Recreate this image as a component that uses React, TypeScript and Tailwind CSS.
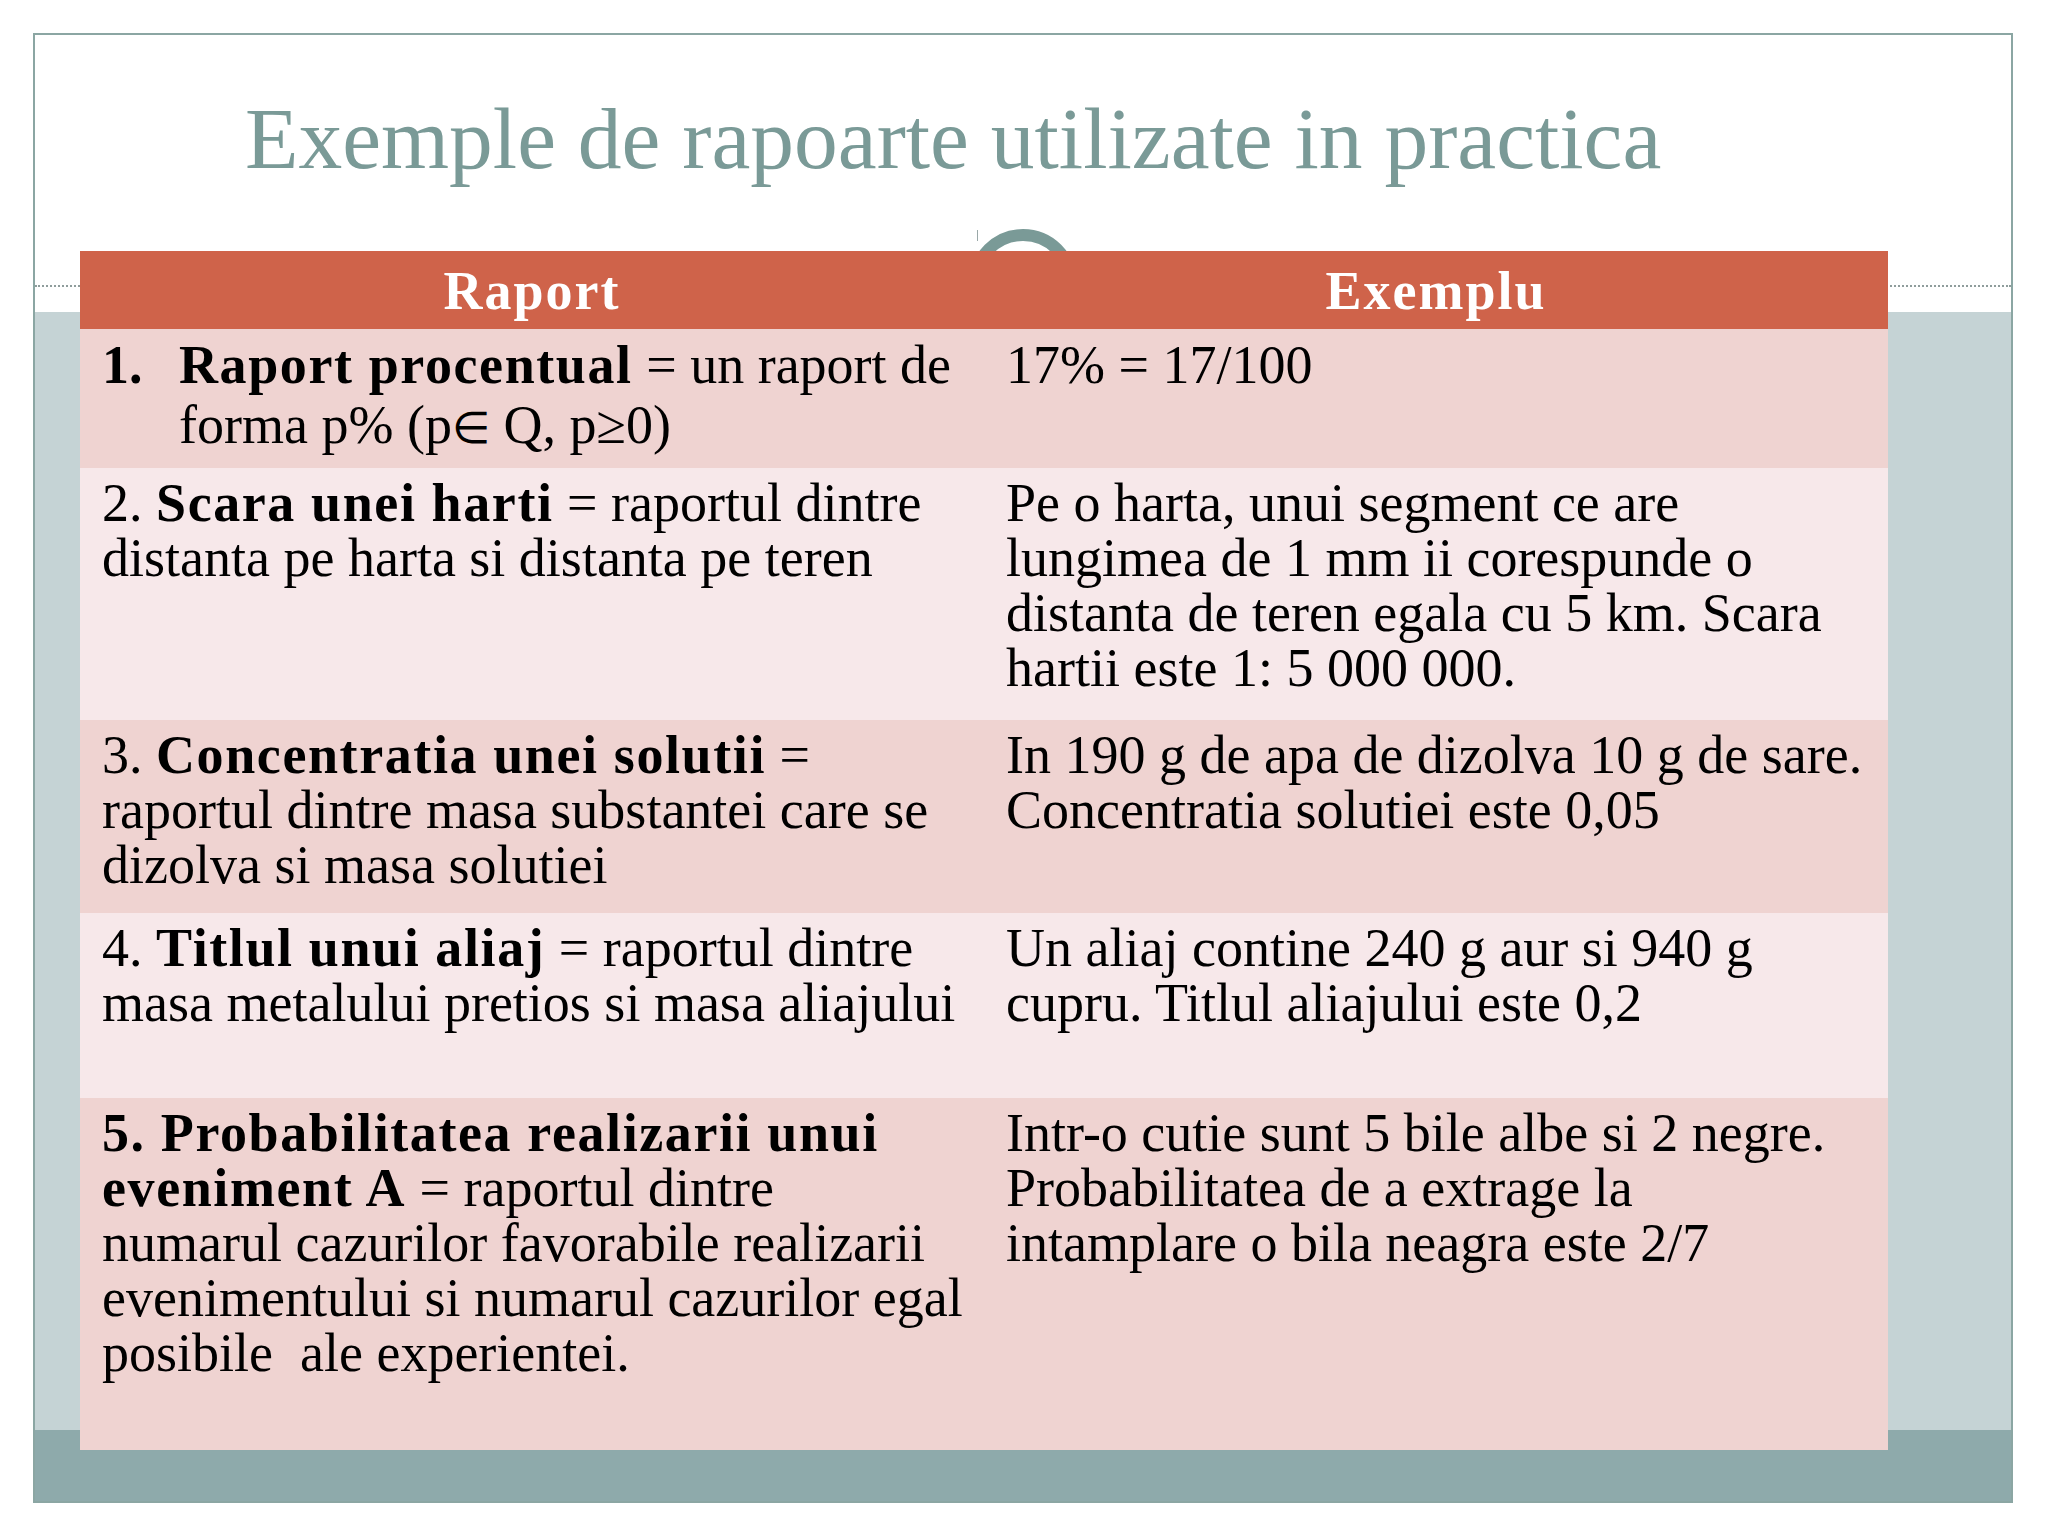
import React from 'react';

const B: React.FC<{ children: React.ReactNode }> = ({ children }) => (
  <span className="font-bold tracking-[1.6px]">{children}</span>
);

interface RowProps {
  className: string;
  left: React.ReactNode;
  right: React.ReactNode;
}

const Row: React.FC<RowProps> = ({ className, left, right }) => (
  <div className={`grid grid-cols-2 text-[54px] leading-[55px] text-black ${className}`}>
    <div className="px-[22px] whitespace-nowrap">{left}</div>
    <div className="px-[22px] whitespace-nowrap">{right}</div>
  </div>
);

export default function App() {
  return (
    <div className="w-[2048px] h-[1536px] bg-white pt-[33px] pl-[33px] font-['Liberation_Serif',serif]">
      <div className="relative w-[1980px] h-[1470px] border-2 border-[#8ba6a3] bg-[linear-gradient(to_bottom,#ffffff_0px,#ffffff_277px,#c5d3d5_277px,#c5d3d5_1395px,#8eaaab_1395px)]">
        {/* slide decorations behind the table */}
        <div className="absolute left-0 right-0 top-[250px] border-t-2 border-dotted border-[#8f9d9c]" />
        <div className="absolute left-[934px] top-[194px] w-[108px] h-[108px] rounded-full border-[12px] border-[#7a9a97] bg-white" />
        <div className="absolute left-[942px] top-[195px] w-px h-[11px] bg-[#9aa8a8]" />

        {/* Title */}
        <div className="h-[216px] pl-[210px] pt-[60px]">
          <h1 className="text-[87.5px] leading-none text-[#7a9a97] whitespace-nowrap">
            Exemple de rapoarte utilizate in practica
          </h1>
        </div>

        {/* Table */}
        <div className="relative ml-[45px] w-[1808px]">
          <div className="grid grid-cols-2 h-[78px] bg-[#cf634a] text-white font-bold text-[54px] tracking-[2px]">
            <div className="flex items-center justify-center">Raport</div>
            <div className="flex items-center justify-center">Exemplu</div>
          </div>

          <Row
            className="h-[139px] pt-[6px] leading-[60px] bg-[#efd3d1]"
            left={
              <div className="flex">
                <span className="w-[77px] shrink-0 font-bold">1.</span>
                <div>
                  <B>Raport procentual</B> = un raport de
                  <br />
                  forma p% (p<span className="text-[44px]">∈</span> Q, p≥0)
                </div>
              </div>
            }
            right={<>17% = 17/100</>}
          />

          <Row
            className="h-[252px] pt-2 bg-[#f7e8ea]"
            left={
              <>
                2. <B>Scara unei harti</B> = raportul dintre
                <br />
                distanta pe harta si distanta pe teren
              </>
            }
            right={
              <>
                Pe o harta, unui segment ce are
                <br />
                lungimea de 1 mm ii corespunde o
                <br />
                distanta de teren egala cu 5 km. Scara
                <br />
                hartii este 1: 5 000 000.
              </>
            }
          />

          <Row
            className="h-[193px] pt-2 bg-[#efd3d1]"
            left={
              <>
                3. <B>Concentratia unei solutii</B> =
                <br />
                raportul dintre masa substantei care se
                <br />
                dizolva si masa solutiei
              </>
            }
            right={
              <>
                In 190 g de apa de dizolva 10 g de sare.
                <br />
                Concentratia solutiei este 0,05
              </>
            }
          />

          <Row
            className="h-[185px] pt-2 bg-[#f7e8ea]"
            left={
              <>
                4. <B>Titlul unui aliaj</B> = raportul dintre
                <br />
                masa metalului pretios si masa aliajului
              </>
            }
            right={
              <>
                Un aliaj contine 240 g aur si 940 g
                <br />
                cupru. Titlul aliajului este 0,2
              </>
            }
          />

          <Row
            className="h-[352px] pt-2 bg-[#efd3d1]"
            left={
              <>
                <B>5. Probabilitatea realizarii unui</B>
                <br />
                <B>eveniment A</B> = raportul dintre
                <br />
                numarul cazurilor favorabile realizarii
                <br />
                evenimentului si numarul cazurilor egal
                <br />
                posibile{'\u00a0'} ale experientei.
              </>
            }
            right={
              <>
                Intr-o cutie sunt 5 bile albe si 2 negre.
                <br />
                Probabilitatea de a extrage la
                <br />
                intamplare o bila neagra este 2/7
              </>
            }
          />
        </div>
      </div>
    </div>
  );
}
